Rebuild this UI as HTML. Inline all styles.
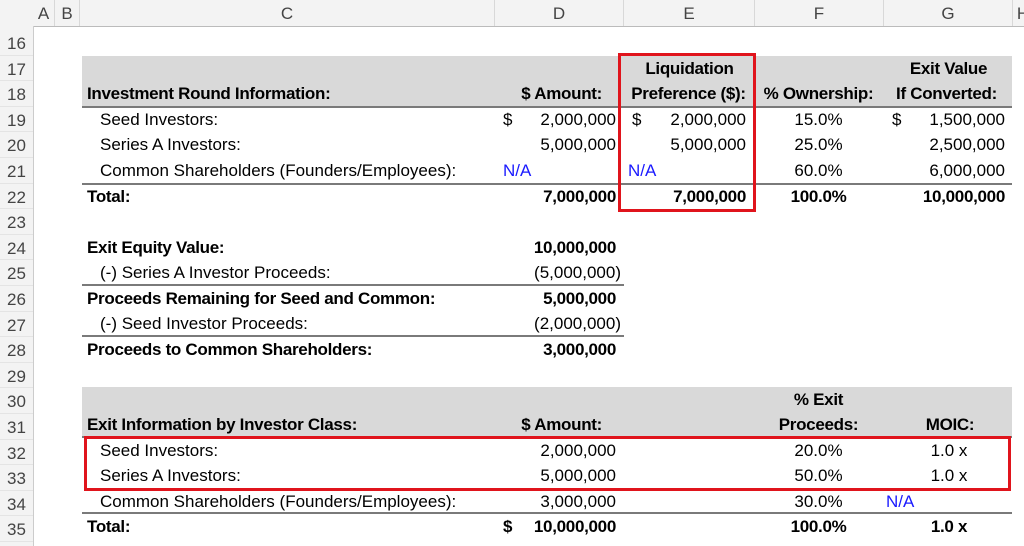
<!DOCTYPE html>
<html><head><style>
body{margin:0;width:1024px;height:546px;overflow:hidden;background:#fff;font-family:"Liberation Sans",Arial,sans-serif;position:relative}
.t{position:absolute;font-size:17px;line-height:26px;height:25.6px;white-space:nowrap;color:#000}
.b{font-weight:bold;letter-spacing:-0.3px}
.r{text-align:right}
.c{text-align:center}
.blue{color:#1a1aff}
.rn{position:absolute;left:0;width:33px;text-align:center;font-size:17px;color:#444;height:25.6px;line-height:27px;border-bottom:1px solid #e4e4e4;box-sizing:border-box}
.ch{position:absolute;top:0;height:26px;line-height:28px;font-size:17px;color:#444;text-align:center;border-right:1px solid #d8d8d8;box-sizing:border-box}
.hl{position:absolute;height:2px;background:#7a7a7a}
.g{position:absolute;background:#d9d9d9}
.red{position:absolute;border:3px solid #e0141c;box-sizing:border-box}
</style></head><body>
<div style="position:absolute;left:0;top:0;width:1024px;height:26px;background:#f3f3f3;border-bottom:1px solid #bbb"></div>
<div style="position:absolute;left:0;top:26px;width:33px;height:520px;background:#f3f3f3;border-right:1px solid #ccc"></div>
<div class="ch" style="left:33px;width:22px">A</div>
<div class="ch" style="left:55px;width:25px">B</div>
<div class="ch" style="left:80px;width:415px">C</div>
<div class="ch" style="left:495px;width:129px">D</div>
<div class="ch" style="left:624px;width:131px">E</div>
<div class="ch" style="left:755px;width:129px">F</div>
<div class="ch" style="left:884px;width:129px">G</div>
<div class="ch" style="left:1013px;width:20px;border:0">H</div>

<div class="rn" style="top:30.0px">16</div><div class="rn" style="top:55.6px">17</div><div class="rn" style="top:81.2px">18</div><div class="rn" style="top:106.8px">19</div><div class="rn" style="top:132.4px">20</div><div class="rn" style="top:158.0px">21</div><div class="rn" style="top:183.6px">22</div><div class="rn" style="top:209.2px">23</div><div class="rn" style="top:234.8px">24</div><div class="rn" style="top:260.4px">25</div><div class="rn" style="top:286.0px">26</div><div class="rn" style="top:311.6px">27</div><div class="rn" style="top:337.2px">28</div><div class="rn" style="top:362.8px">29</div><div class="rn" style="top:388.4px">30</div><div class="rn" style="top:414.0px">31</div><div class="rn" style="top:439.6px">32</div><div class="rn" style="top:465.2px">33</div><div class="rn" style="top:490.8px">34</div><div class="rn" style="top:516.4px">35</div>

<div class="g" style="left:82px;top:56px;width:930px;height:51px"></div>
<div class="hl" style="left:82px;top:106px;width:930px"></div>
<div class="hl" style="left:82px;top:183px;width:930px"></div>
<div class="hl" style="left:82px;top:284px;width:542px"></div>
<div class="hl" style="left:82px;top:335px;width:542px"></div>
<div class="g" style="left:82px;top:387px;width:930px;height:50px"></div>
<div class="hl" style="left:82px;top:436px;width:930px"></div>
<div class="hl" style="left:82px;top:512px;width:930px"></div>

<div class="t b c" style="left:624px;width:131px;top:56px">Liquidation</div>
<div class="t b c" style="left:884px;width:129px;top:56px">Exit Value</div>
<div class="t b" style="left:87px;top:81px">Investment Round Information:</div>
<div class="t b r" style="left:495px;width:107px;top:81px">$ Amount:</div>
<div class="t b c" style="left:618px;width:141px;top:81px">Preference ($):</div>
<div class="t b c" style="left:755px;width:127px;top:81px">% Ownership:</div>
<div class="t b c" style="left:884px;width:125px;top:81px">If Converted:</div>

<div class="t" style="left:100px;top:107px">Seed Investors:</div>
<div class="t" style="left:503px;top:107px">$</div>
<div class="t r" style="left:495px;width:121px;top:107px">2,000,000</div>
<div class="t" style="left:632px;top:107px">$</div>
<div class="t r" style="left:624px;width:122px;top:107px">2,000,000</div>
<div class="t c" style="left:755px;width:127px;top:107px">15.0%</div>
<div class="t" style="left:892px;top:107px">$</div>
<div class="t r" style="left:884px;width:121px;top:107px">1,500,000</div>

<div class="t" style="left:100px;top:132px">Series A Investors:</div>
<div class="t r" style="left:495px;width:121px;top:132px">5,000,000</div>
<div class="t r" style="left:624px;width:122px;top:132px">5,000,000</div>
<div class="t c" style="left:755px;width:127px;top:132px">25.0%</div>
<div class="t r" style="left:884px;width:121px;top:132px">2,500,000</div>

<div class="t" style="left:100px;top:158px">Common Shareholders (Founders/Employees):</div>
<div class="t blue" style="left:503px;top:158px">N/A</div>
<div class="t blue" style="left:628px;top:158px">N/A</div>
<div class="t c" style="left:755px;width:127px;top:158px">60.0%</div>
<div class="t r" style="left:884px;width:121px;top:158px">6,000,000</div>

<div class="t b" style="left:87px;top:184px">Total:</div>
<div class="t b r" style="left:495px;width:121px;top:184px">7,000,000</div>
<div class="t b r" style="left:624px;width:122px;top:184px">7,000,000</div>
<div class="t b c" style="left:755px;width:127px;top:184px">100.0%</div>
<div class="t b r" style="left:884px;width:121px;top:184px">10,000,000</div>

<div class="t b" style="left:87px;top:235px">Exit Equity Value:</div>
<div class="t b r" style="left:495px;width:121px;top:235px">10,000,000</div>
<div class="t" style="left:100px;top:260px">(-) Series A Investor Proceeds:</div>
<div class="t r" style="left:495px;width:126px;top:260px">(5,000,000)</div>
<div class="t b" style="left:87px;top:286px">Proceeds Remaining for Seed and Common:</div>
<div class="t b r" style="left:495px;width:121px;top:286px">5,000,000</div>
<div class="t" style="left:100px;top:311px">(-) Seed Investor Proceeds:</div>
<div class="t r" style="left:495px;width:126px;top:311px">(2,000,000)</div>
<div class="t b" style="left:87px;top:337px">Proceeds to Common Shareholders:</div>
<div class="t b r" style="left:495px;width:121px;top:337px">3,000,000</div>

<div class="t b c" style="left:755px;width:127px;top:387px">% Exit</div>
<div class="t b" style="left:87px;top:412px">Exit Information by Investor Class:</div>
<div class="t b r" style="left:495px;width:107px;top:412px">$ Amount:</div>
<div class="t b c" style="left:755px;width:127px;top:412px">Proceeds:</div>
<div class="t b c" style="left:884px;width:132px;top:412px">MOIC:</div>

<div class="t" style="left:100px;top:438px">Seed Investors:</div>
<div class="t r" style="left:495px;width:121px;top:438px">2,000,000</div>
<div class="t c" style="left:755px;width:127px;top:438px">20.0%</div>
<div class="t c" style="left:884px;width:130px;top:438px">1.0 x</div>
<div class="t" style="left:100px;top:463px">Series A Investors:</div>
<div class="t r" style="left:495px;width:121px;top:463px">5,000,000</div>
<div class="t c" style="left:755px;width:127px;top:463px">50.0%</div>
<div class="t c" style="left:884px;width:130px;top:463px">1.0 x</div>
<div class="t" style="left:100px;top:489px">Common Shareholders (Founders/Employees):</div>
<div class="t r" style="left:495px;width:121px;top:489px">3,000,000</div>
<div class="t c" style="left:755px;width:127px;top:489px">30.0%</div>
<div class="t blue" style="left:886px;top:489px">N/A</div>
<div class="t b" style="left:87px;top:514px">Total:</div>
<div class="t b" style="left:503px;top:514px">$</div>
<div class="t b r" style="left:495px;width:121px;top:514px">10,000,000</div>
<div class="t b c" style="left:755px;width:127px;top:514px">100.0%</div>
<div class="t b c" style="left:884px;width:130px;top:514px">1.0 x</div>

<div class="red" style="left:618px;top:53px;width:138px;height:159px"></div>
<div class="red" style="left:84px;top:436px;width:927px;height:55px"></div>
</body></html>
